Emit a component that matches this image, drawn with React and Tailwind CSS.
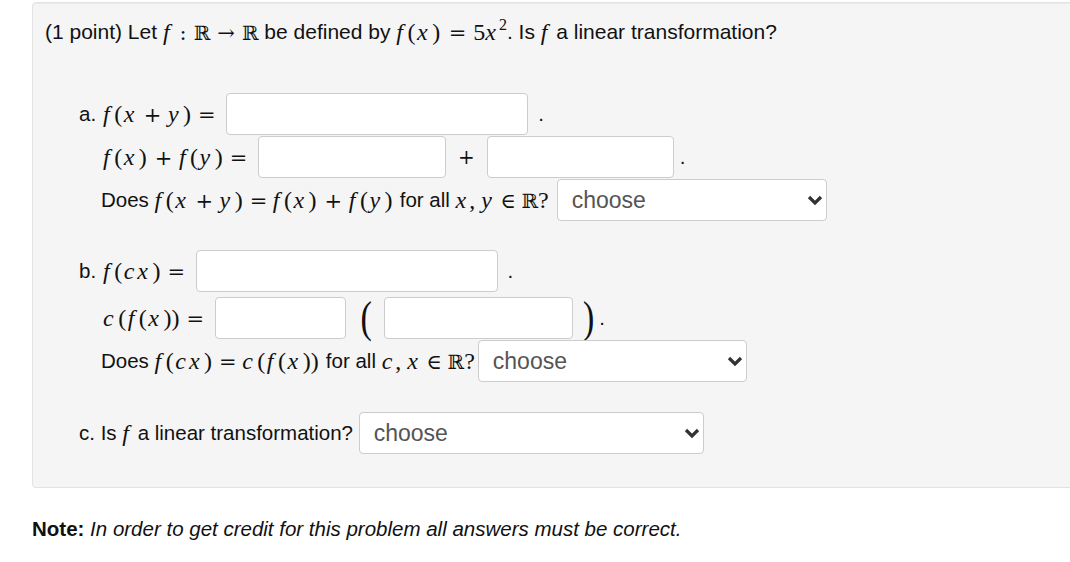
import React from "react";

// math bits, set in a serif italic like the rendered TeX
const mathFont = { fontFamily: "'Liberation Serif','DejaVu Serif',serif" };
const opFont = { fontFamily: "'DejaVu Serif','Liberation Serif',serif" };

function M({ children, className = "" }) {
  return (
    <span className={`text-[24px] leading-none whitespace-nowrap ${className}`} style={mathFont}>
      {children}
    </span>
  );
}

const V = ({ children }) => <i className="italic pr-[3px]">{children}</i>;
const P = ({ children }) => <span className="px-[1.5px]">{children}</span>;
const Bin = ({ children }) => (
  <span className="mx-[6.5px] text-[21px]" style={opFont}>
    {children}
  </span>
);
const Rel = ({ children, className = "mx-[5.5px]" }) => (
  <span className={`${className} text-[21px]`} style={opFont}>
    {children}
  </span>
);
const R = () => (
  <span style={opFont} className="text-[20px] font-light">
    ℝ
  </span>
);

function Box({ w }) {
  return <input type="text" className={`${w} h-[42px] rounded-[4px] border border-[#cccccc] bg-white px-3 outline-none`} />;
}

function Choose({ w }) {
  return (
    <div className={`relative ${w} h-[42px]`}>
      <select className="w-full h-full appearance-none rounded-[4px] border border-[#cccccc] bg-white pl-[14px] text-[23px] text-[#555555] outline-none">
        <option>choose</option>
        <option>yes</option>
        <option>no</option>
      </select>
      <svg className="pointer-events-none absolute right-[4px] top-[16px]" width="16" height="11" viewBox="0 0 16 11">
        <path d="M2 2 L8 8 L14 2" fill="none" stroke="#333" strokeWidth="3.2" />
      </svg>
    </div>
  );
}

const BigParen = ({ children, className = "" }) => (
  <span className={`inline-block scale-y-[1.3] text-[34px] leading-none ${className}`} style={mathFont}>
    {children}
  </span>
);

export default function App() {
  return (
    <div
      className="w-full h-[562px] overflow-hidden bg-white text-[20.5px] text-[#111]"
      style={{ fontFamily: "'Liberation Sans',Arial,sans-serif" }}
    >
      <div className="ml-[32px] mt-[2px] w-[1120px] rounded-[4px] border border-[#e3e3e3] bg-[#f5f5f5] pl-[12px] pt-[15px] pb-[33px] shadow-[inset_0_1px_1px_rgba(0,0,0,0.05)]">
        {/* problem statement */}
        <div className="h-[28px] flex items-center whitespace-nowrap text-[21px]">
          <span>(1 point) Let&nbsp;</span>
          <M>
            <V>f</V>
            <Rel className="mx-[7px]">:</Rel>
            <R />
            <Rel className="mx-[7px]">→</Rel>
            <R />
          </M>
          <span>&nbsp;be defined by&nbsp;</span>
          <M>
            <V>f</V>
            <P>(</P>
            <V>x</V>
            <P>)</P>
            <Rel className="mx-[7px]">=</Rel>5<V>x</V>
            <span className="inline-block align-top text-[16px] relative -top-[3px]">2</span>
          </M>
          <span>. Is&nbsp;</span>
          <M>
            <V>f</V>
          </M>
          <span>&nbsp;a linear transformation?</span>
        </div>

        {/* part a */}
        <div className="mt-[47px] ml-[34px] flex flex-col gap-[1px]">
          <div className="flex items-center h-[42px]">
            <span className="w-[24px]">a.</span>
            <M>
              <V>f</V>
              <P>(</P>
              <V>x</V>
              <Bin>+</Bin>
              <V>y</V>
              <P>)</P>
              <Rel>=</Rel>
            </M>
            <span className="w-[5px]" />
            <Box w="w-[302px]" />
            <span className="ml-[10px]">.</span>
          </div>
          <div className="flex items-center h-[42px] pl-[24px]">
            <M>
              <V>f</V>
              <P>(</P>
              <V>x</V>
              <P>)</P>
              <Bin>+</Bin>
              <V>f</V>
              <P>(</P>
              <V>y</V>
              <P>)</P>
              <Rel>=</Rel>
            </M>
            <span className="w-[5px]" />
            <Box w="w-[188px]" />
            <span className="mx-[12px] text-[20px]" style={opFont}>
              +
            </span>
            <Box w="w-[187px]" />
            <span className="ml-[6px]">.</span>
          </div>
          <div className="flex items-center h-[42px] pl-[22px] whitespace-nowrap">
            <span>Does&nbsp;</span>
            <M>
              <V>f</V>
              <P>(</P>
              <V>x</V>
              <Bin>+</Bin>
              <V>y</V>
              <P>)</P>
              <Rel>=</Rel>
              <V>f</V>
              <P>(</P>
              <V>x</V>
              <P>)</P>
              <Bin>+</Bin>
              <V>f</V>
              <P>(</P>
              <V>y</V>
              <P>)</P>
            </M>
            <span>&nbsp;for all&nbsp;</span>
            <M>
              <V>x</V>,&nbsp;<V>y</V>
              <Rel>∈</Rel>
              <R />?
            </M>
            <span className="w-[8px]" />
            <Choose w="w-[270px]" />
          </div>
        </div>

        {/* part b */}
        <div className="mt-[29px] ml-[34px] flex flex-col">
          <div className="flex items-center h-[42px]">
            <span className="w-[24px]">b.</span>
            <M>
              <V>f</V>
              <P>(</P>
              <V>c</V>
              <V>x</V>
              <P>)</P>
              <Rel>=</Rel>
            </M>
            <span className="w-[5px]" />
            <Box w="w-[302px]" />
            <span className="ml-[10px]">.</span>
          </div>
          <div className="mt-[5px] flex items-center h-[42px] pl-[24px]">
            <M>
              <V>c</V>
              <P>(</P>
              <V>f</V>
              <P>(</P>
              <V>x</V>
              <P>))</P>
              <Rel>=</Rel>
            </M>
            <span className="w-[5px]" />
            <Box w="w-[131px]" />
            <BigParen className="ml-[15px] mr-[12px]">(</BigParen>
            <Box w="w-[189px]" />
            <BigParen className="ml-[10px]">)</BigParen>
            <span className="ml-[5px]">.</span>
          </div>
          <div className="mt-[1px] flex items-center h-[42px] pl-[22px] whitespace-nowrap">
            <span>Does&nbsp;</span>
            <M>
              <V>f</V>
              <P>(</P>
              <V>c</V>
              <V>x</V>
              <P>)</P>
              <Rel>=</Rel>
              <V>c</V>
              <P>(</P>
              <V>f</V>
              <P>(</P>
              <V>x</V>
              <P>))</P>
            </M>
            <span>&nbsp;for all&nbsp;</span>
            <M>
              <V>c</V>,&nbsp;<V>x</V>
              <Rel>∈</Rel>
              <R />?
            </M>
            <span className="w-[3px]" />
            <Choose w="w-[269px]" />
          </div>
        </div>

        {/* part c */}
        <div className="mt-[30px] ml-[34px] flex items-center h-[42px] whitespace-nowrap">
          <span>c. Is&nbsp;</span>
          <M>
            <V>f</V>
          </M>
          <span>&nbsp;a linear transformation?&nbsp;</span>
          <Choose w="w-[345px]" />
        </div>
      </div>

      <p className="ml-[32px] mt-[26px] whitespace-nowrap">
        <b>Note:</b> <i>In order to get credit for this problem all answers must be correct.</i>
      </p>
    </div>
  );
}
